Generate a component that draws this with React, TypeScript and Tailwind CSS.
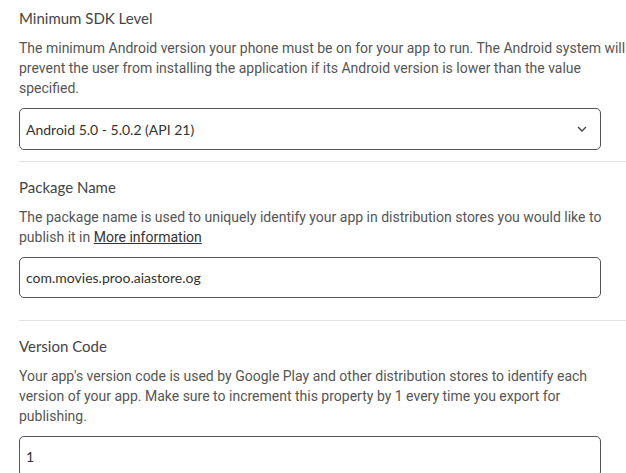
import React from "react";

const headFont = { fontFamily: "Lato, 'Open Sans', sans-serif" };
const bodyFont = { fontFamily: "Roboto, 'Liberation Sans', sans-serif" };

function Heading({ children }: { children: React.ReactNode }) {
  return (
    <h2 className="text-[15px] leading-[24px] text-[#444]" style={headFont}>
      {children}
    </h2>
  );
}

function Desc({ children }: { children: React.ReactNode }) {
  return (
    <p className="mt-[8px] text-[14px] leading-[20px] text-[#555]" style={bodyFont}>
      {children}
    </p>
  );
}

export default function App() {
  return (
    <div className="w-[626px] h-[473px] overflow-hidden bg-white pl-[19px]">
      <section className="pt-[6px] pb-[11px] border-b border-[#e3e3e3]">
        <Heading>Minimum SDK Level</Heading>
        <Desc>
          The minimum Android version your phone must be on for your app to run. The Android system will
          prevent the user from installing the application if its Android version is lower than the value
          specified.
        </Desc>
        <div className="mt-[10px] w-[582px] h-[42px] rounded-[5px] border border-[#555] flex items-center justify-between pl-[6px] pr-[13px]">
          <span className="text-[14px] text-[#333]" style={headFont}>
            Android 5.0 - 5.0.2 (API 21)
          </span>
          <svg width="10" height="6" viewBox="0 0 10 6" fill="none">
            <path d="M1 1l4 4 4-4" stroke="#444" strokeWidth="1.4" />
          </svg>
        </div>
      </section>
      <section className="pt-[13px] pb-[22px] border-b border-[#e3e3e3]">
        <Heading>Package Name</Heading>
        <Desc>
          The package name is used to uniquely identify your app in distribution stores you would like to
          publish it in <a className="underline text-[#333]">More information</a>
        </Desc>
        <div className="mt-[10px] w-[582px] h-[41px] rounded-[5px] border border-[#555] flex items-center pl-[6px]">
          <span className="text-[14px] text-[#333]" style={headFont}>
            com.movies.proo.aiastore.og
          </span>
        </div>
      </section>
      <section className="pt-[13px]">
        <Heading>Version Code</Heading>
        <Desc>
          Your app's version code is used by Google Play and other distribution stores to identify each
          version of your app. Make sure to increment this property by 1 every time you export for
          publishing.
        </Desc>
        <div className="mt-[10px] w-[582px] h-[41px] rounded-[5px] border border-[#555] flex items-center pl-[6px]">
          <span className="text-[14px] text-[#333]" style={headFont}>
            1
          </span>
        </div>
      </section>
    </div>
  );
}
